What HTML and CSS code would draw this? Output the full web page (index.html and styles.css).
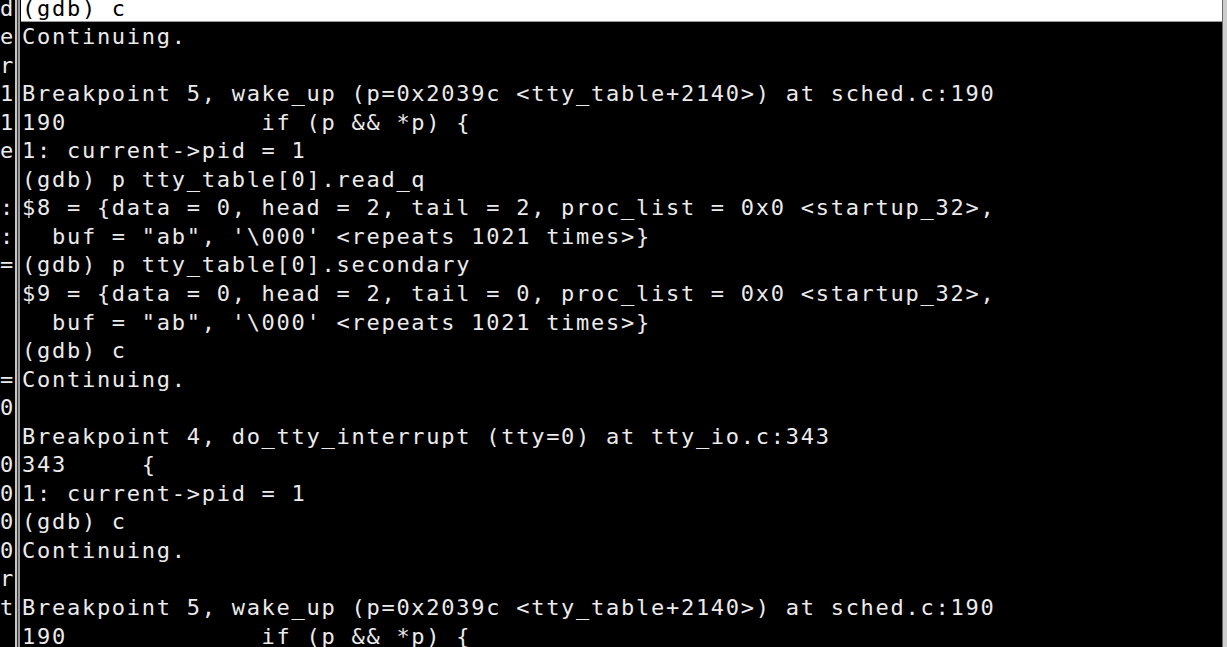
FILE: index.html
```html
<!DOCTYPE html>
<html>
<head>
<meta charset="utf-8">
<link rel="stylesheet" href="styles.css">
</head>
<body>
<div class="screen">
  <div class="side">
    <div class="side-inner">
<div class="ln">d</div>
<div class="ln">e</div>
<div class="ln">r</div>
<div class="ln">1</div>
<div class="ln">1</div>
<div class="ln">e</div>
<div class="ln"> </div>
<div class="ln">:</div>
<div class="ln">:</div>
<div class="ln">=</div>
<div class="ln"> </div>
<div class="ln"> </div>
<div class="ln"> </div>
<div class="ln">=</div>
<div class="ln">0</div>
<div class="ln"> </div>
<div class="ln">0</div>
<div class="ln">0</div>
<div class="ln">0</div>
<div class="ln">0</div>
<div class="ln">r</div>
<div class="ln">t</div>
<div class="ln"> </div>
    </div>
  </div>
  <div class="divider"></div>
  <div class="term">
    <div class="current"><div class="ln">(gdb) c</div></div>
    <div class="output">
<div class="ln">Continuing.</div>
<div class="ln"> </div>
<div class="ln">Breakpoint 5, wake_up (p=0x2039c &lt;tty_table+2140&gt;) at sched.c:190</div>
<div class="ln">190             if (p &amp;&amp; *p) {</div>
<div class="ln">1: current-&gt;pid = 1</div>
<div class="ln">(gdb) p tty_table[0].read_q</div>
<div class="ln">$8 = {data = 0, head = 2, tail = 2, proc_list = 0x0 &lt;startup_32&gt;,</div>
<div class="ln">  buf = "ab", '\000' &lt;repeats 1021 times&gt;}</div>
<div class="ln">(gdb) p tty_table[0].secondary</div>
<div class="ln">$9 = {data = 0, head = 2, tail = 0, proc_list = 0x0 &lt;startup_32&gt;,</div>
<div class="ln">  buf = "ab", '\000' &lt;repeats 1021 times&gt;}</div>
<div class="ln">(gdb) c</div>
<div class="ln">Continuing.</div>
<div class="ln"> </div>
<div class="ln">Breakpoint 4, do_tty_interrupt (tty=0) at tty_io.c:343</div>
<div class="ln">343     {</div>
<div class="ln">1: current-&gt;pid = 1</div>
<div class="ln">(gdb) c</div>
<div class="ln">Continuing.</div>
<div class="ln"> </div>
<div class="ln">Breakpoint 5, wake_up (p=0x2039c &lt;tty_table+2140&gt;) at sched.c:190</div>
<div class="ln">190             if (p &amp;&amp; *p) {</div>
    </div>
  </div>
  <div class="rborder"></div>
</div>
</body>
</html>
```
FILE: styles.css
```css
html, body {
  margin: 0;
  padding: 0;
  background: #000;
  overflow: hidden;
}

.screen {
  display: flex;
  width: 1227px;
  height: 647px;
  background: #000;
  overflow: hidden;
  font-family: "DejaVu Sans Mono", monospace;
  font-size: 22px;
  letter-spacing: 1.73px;
  color: #ebebeb;
}

.ln {
  height: 28.55px;
  line-height: 28.55px;
  white-space: pre;
}

.side {
  width: 14px;
  flex: none;
  overflow: hidden;
  letter-spacing: 0;
}

.side-inner {
  margin-top: -5.5px;
}

.divider {
  width: 7px;
  flex: none;
  background: linear-gradient(to right,
    #000 0, #000 1px,
    #c4c4c4 1px, #c4c4c4 3px,
    #3a3a3a 3px, #3a3a3a 4px,
    #9a9a9a 4px, #9a9a9a 6px,
    #000 6px, #000 7px);
}

.term {
  flex: 1;
  min-width: 0;
  overflow: hidden;
}

.current {
  height: 21px;
  overflow: hidden;
  background: #fff;
  color: #000;
  border-bottom: 1px solid #9a9a9a;
}

.current .ln {
  margin-top: -5.5px;
  padding-left: 1px;
}

.output {
  padding-top: 1.1px;
  padding-left: 1px;
}

.rborder {
  width: 5px;
  flex: none;
  background: linear-gradient(to right,
    #6a6a6a 0, #6a6a6a 1px,
    #cdcdcd 1px, #cdcdcd 5px);
}
```
